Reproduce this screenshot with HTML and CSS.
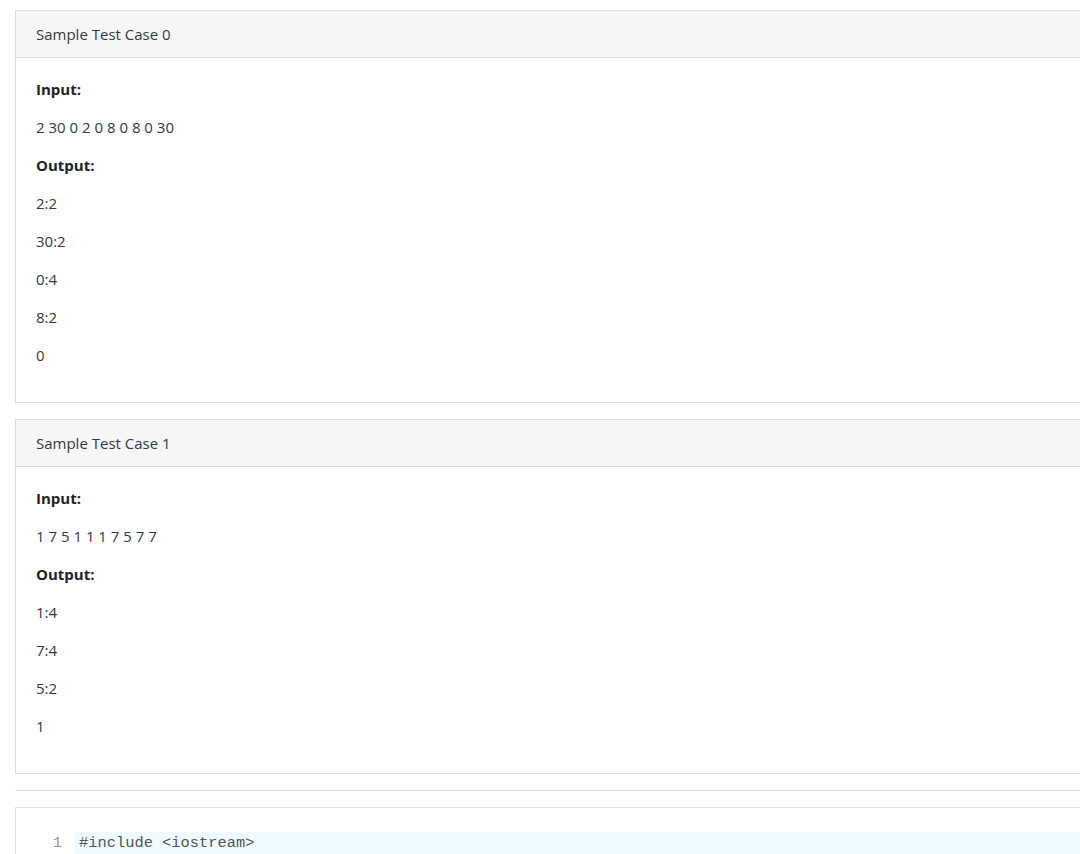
FILE: index.html
```html
<!DOCTYPE html>
<html>
<head>
<meta charset="utf-8">
<link rel="stylesheet" href="styles.css">
</head>
<body>
<div class="page">
  <section class="card">
    <div class="card-head">Sample Test Case 0</div>
    <div class="card-body">
      <p class="label">Input:</p>
      <p>2 30 0 2 0 8 0 8 0 30</p>
      <p class="label">Output:</p>
      <p>2:2</p>
      <p>30:2</p>
      <p>0:4</p>
      <p>8:2</p>
      <p>0</p>
    </div>
  </section>
  <section class="card">
    <div class="card-head">Sample Test Case 1</div>
    <div class="card-body">
      <p class="label">Input:</p>
      <p>1 7 5 1 1 1 7 5 7 7</p>
      <p class="label">Output:</p>
      <p>1:4</p>
      <p>7:4</p>
      <p>5:2</p>
      <p>1</p>
    </div>
  </section>
  <hr class="divider">
  <section class="editor">
    <div class="code-line">
      <span class="ln">1</span>
      <span class="code">#include &lt;iostream&gt;</span>
    </div>
  </section>
</div>
</body>
</html>
```
FILE: styles.css
```css
html, body {
  margin: 0;
  padding: 0;
  background: #fff;
  overflow: hidden;
}
body {
  font-family: "Open Sans", "Liberation Sans", sans-serif;
  font-size: 15px;
  color: #333a44;
}
.page {
  padding: 10px 0 0 15px;
  width: 1120px;
}
.card {
  border: 1px solid #dcdcdc;
  margin-bottom: 16px;
}
.card-head {
  background: #f6f6f6;
  border-bottom: 1px solid #dcdcdc;
  height: 46px;
  line-height: 46px;
  padding: 0 20px;
}
.card-body {
  padding: 21px 20px 19px;
}
.card-body p {
  margin: 0 0 18px;
  line-height: 20px;
}
.card-body p.label {
  font-weight: 700;
  color: #1f2329;
}
.divider {
  border: 0;
  border-top: 1px solid #e2e2e2;
  margin: 0 0 16px;
  height: 0;
}
.editor {
  border: 1px solid #e2e2e2;
  padding-top: 24px;
  height: 60px;
}
.code-line {
  display: flex;
  align-items: center;
  height: 22px;
}
.ln {
  width: 59px;
  text-align: right;
  padding-right: 13px;
  color: #999;
  font-family: "Liberation Mono", "DejaVu Sans Mono", monospace;
  font-size: 15.4px;
  box-sizing: border-box;
}
.code {
  flex: 1;
  background: #f0fbff;
  height: 22px;
  line-height: 22px;
  padding-left: 4px;
  color: #555;
  font-family: "Liberation Mono", "DejaVu Sans Mono", monospace;
  font-size: 15.4px;
}
```
